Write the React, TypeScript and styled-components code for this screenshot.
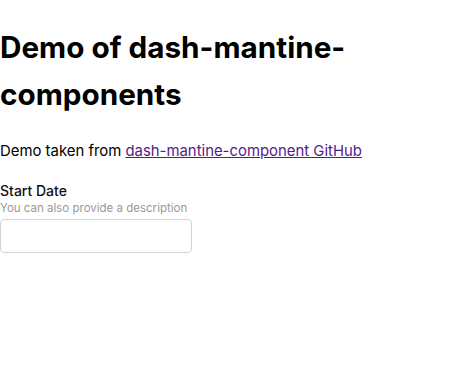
import React from "react";
import styled, { createGlobalStyle } from "styled-components";

const GlobalStyle = createGlobalStyle`
  body {
    margin: 0;
    background: #fff;
    font-family: Inter, "Noto Sans", sans-serif;
    color: #000;
  }
`;

const Page = styled.div`
  display: flex;
  flex-direction: column;
`;

const Title = styled.h1`
  font-size: 29.7px;
  font-weight: 700;
  line-height: 47px;
  margin: 24px 0 0;
`;

const Intro = styled.p`
  font-size: 14.9px;
  margin: 21px 0 0;
  line-height: 24px;
`;

const RepoLink = styled.a`
  color: #551a8b;
`;

const Field = styled.div`
  display: flex;
  flex-direction: column;
  margin-top: 18px;
`;

const Label = styled.label`
  font-size: 14px;
  font-weight: 500;
  color: #111;
  line-height: 20px;
`;

const Description = styled.div`
  font-size: 11.5px;
  color: #999;
  line-height: 14px;
  white-space: nowrap;
  margin-bottom: 4px;
`;

const Input = styled.input`
  width: 192px;
  height: 34px;
  box-sizing: border-box;
  border: 1px solid #ced4da;
  border-radius: 4px;
  font-family: inherit;
  font-size: 14px;
  padding: 0 12px;
  outline: none;
`;

export default function App() {
  return (
    <Page>
      <GlobalStyle />
      <Title>Demo of dash-mantine-components</Title>
      <Intro>
        Demo taken from{" "}
        <RepoLink href="#">dash-mantine-component GitHub</RepoLink>
      </Intro>
      <Field>
        <Label>Start Date</Label>
        <Description>You can also provide a description</Description>
        <Input />
      </Field>
    </Page>
  );
}
